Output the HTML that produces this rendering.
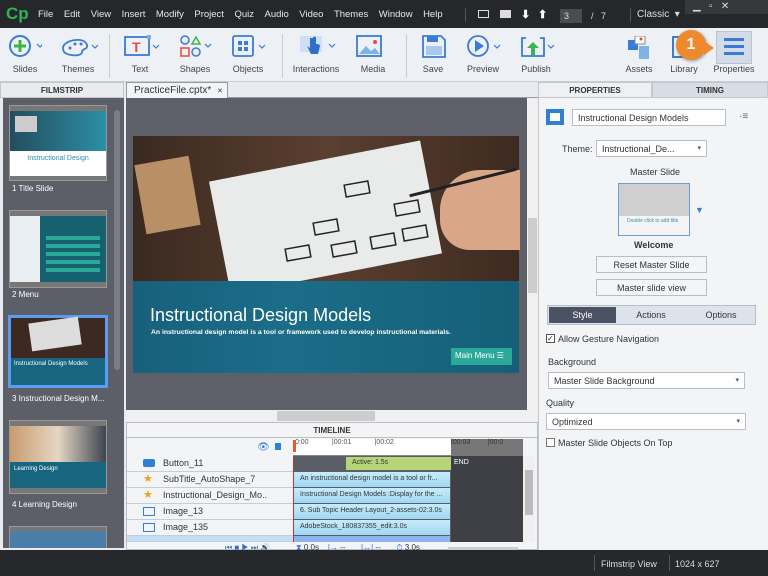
<!DOCTYPE html>
<html><head><meta charset="utf-8"><style>
*{margin:0;padding:0;box-sizing:border-box}
body{width:768px;height:576px;overflow:hidden;background:#e8ebf0;font-family:"Liberation Sans",sans-serif;font-size:9px;color:#333;position:relative}
.a{position:absolute}
.menu span{margin-right:10.5px;color:#e8e8e8;font-size:9.5px}
.tb{position:absolute;top:64px;font-size:9px;color:#444;text-align:center;width:60px}
.ic{position:absolute}
.ph{font-weight:bold;font-size:8px;text-align:center;color:#333}
.row{height:16px;border-bottom:1px solid #c8ccd4;position:absolute;left:0;width:166px;font-size:9px;color:#333}
.bar{position:absolute;left:0;height:15px;background:linear-gradient(#c8ecfb,#9ed8f2);font-size:7px;padding:3px 0 0 6px;color:#333;width:156px}
.btn{position:absolute;background:#f4f5f7;border:1px solid #b9bdc5;text-align:center;font-size:9px;padding-top:3px}
.dd{position:absolute;background:#fff;border:1px solid #b9bdc5;font-size:9px;padding:3px 5px}
</style></head><body>
<div class="a" style="left:0;top:0;width:768px;height:28px;background:#25272b"></div>
<div class="a" style="left:6px;top:4px;color:#2fb457;font-weight:bold;font-size:17px">Cp</div>
<div class="a menu" style="left:38px;top:9px;white-space:nowrap"><span>File</span><span>Edit</span><span>View</span><span>Insert</span><span>Modify</span><span>Project</span><span>Quiz</span><span>Audio</span><span>Video</span><span>Themes</span><span>Window</span><span>Help</span></div>
<div class="a" style="left:465px;top:8px;width:1px;height:14px;background:#555"></div>
<div class="a" style="left:478px;top:10px;width:11px;height:8px;border:1px solid #ddd"></div>
<div class="a" style="left:500px;top:10px;width:11px;height:8px;background:#ddd"></div>
<div class="a" style="left:521px;top:8px;color:#fff;font-size:11px;font-weight:bold">⬇</div>
<div class="a" style="left:538px;top:8px;color:#fff;font-size:11px;font-weight:bold">⬆</div>
<div class="a" style="left:560px;top:9px;width:22px;height:14px;background:#4a4c50;color:#ddd;font-size:9px;padding:2px 4px">3</div>
<div class="a" style="left:591px;top:11px;color:#ddd;font-size:9px">/ &nbsp; 7</div>
<div class="a" style="left:630px;top:8px;width:1px;height:14px;background:#555"></div>
<div class="a" style="left:637px;top:9px;color:#ddd;font-size:10px">Classic &nbsp;▾</div>
<div class="a" style="left:685px;top:0;width:83px;height:14px;background:#36383c"></div>
<div class="a" style="left:693px;top:1px;color:#ddd;font-size:10px;white-space:nowrap">▁ &nbsp; ▫ &nbsp;  ✕</div>
<div class="a" style="left:0;top:28px;width:768px;height:54px;background:#edf0f5;border-bottom:1px solid #c9ccd3"></div>
<svg class="ic" style="left:8px;top:34px" width="34" height="24"><circle cx="12" cy="12" r="10" fill="none" stroke="#3a7bd5" stroke-width="2"/><path d="M12 6v12M6 12h12" stroke="#3bb54a" stroke-width="3"/><path d="M29 10l3 3 3-3" fill="none" stroke="#3a7bd5" stroke-width="1.2"/></svg>
<svg class="ic" style="left:60px;top:36px" width="38" height="22"><path d="M3 12c0-8 22-12 24-3 1 5-5 3-5 7 0 3-6 4-11 3C5 18 3 16 3 12z" fill="none" stroke="#3a7bd5" stroke-width="1.8"/><circle cx="10" cy="12" r="1.5" fill="#3a7bd5"/><circle cx="15" cy="8" r="1.5" fill="#3a7bd5"/><circle cx="21" cy="8" r="1.5" fill="#3a7bd5"/><path d="M32 9l3 3 3-3" fill="none" stroke="#3a7bd5" stroke-width="1.2"/></svg>
<div class="a" style="left:109px;top:34px;width:1px;height:44px;background:#c9ccd3"></div>
<svg class="ic" style="left:124px;top:35px" width="36" height="24"><rect x="1" y="2" width="24" height="18" fill="none" stroke="#3a7bd5" stroke-width="1.8"/><text x="8" y="17" fill="#e84b3c" font-size="14" font-family="Liberation Sans" font-weight="bold">T</text><rect x="23" y="0" width="4" height="4" fill="#8ad" /><path d="M29 10l3 3 3-3" fill="none" stroke="#3a7bd5" stroke-width="1.2"/></svg>
<svg class="ic" style="left:179px;top:35px" width="36" height="24"><circle cx="6" cy="5" r="4" fill="none" stroke="#3a7bd5" stroke-width="1.5"/><path d="M13 9l4-7 4 7z" fill="none" stroke="#3bb54a" stroke-width="1.5"/><rect x="2" y="13" width="8" height="8" fill="none" stroke="#e84b3c" stroke-width="1.5"/><circle cx="17" cy="17" r="4" fill="none" stroke="#3a7bd5" stroke-width="1.5"/><path d="M26 9l3 3 3-3" fill="none" stroke="#3a7bd5" stroke-width="1.2"/></svg>
<svg class="ic" style="left:232px;top:35px" width="36" height="24"><rect x="1" y="1" width="20" height="20" rx="2" fill="none" stroke="#3a7bd5" stroke-width="1.8"/><rect x="6" y="6" width="4" height="4" fill="#3a7bd5"/><rect x="12" y="6" width="4" height="4" fill="#3a7bd5"/><rect x="6" y="12" width="4" height="4" fill="#3a7bd5"/><rect x="12" y="12" width="4" height="4" fill="#3a7bd5"/><path d="M27 10l3 3 3-3" fill="none" stroke="#3a7bd5" stroke-width="1.2"/></svg>
<div class="a" style="left:282px;top:34px;width:1px;height:44px;background:#c9ccd3"></div>
<svg class="ic" style="left:300px;top:34px" width="36" height="24"><rect x="0" y="2" width="22" height="16" fill="#cde0f5"/><path d="M10 4v10l-3-2 4 8h7l2-8c0-2-3-2-4-2V4c0-2-3-2-3 0z" fill="#2f6fc8"/><path d="M29 10l3 3 3-3" fill="none" stroke="#3a7bd5" stroke-width="1.2"/></svg>
<svg class="ic" style="left:356px;top:35px" width="34" height="24"><rect x="1" y="1" width="24" height="20" fill="none" stroke="#3a7bd5" stroke-width="1.8"/><path d="M3 19l7-8 5 5 4-3 5 6z" fill="#7fb3e8"/><circle cx="19" cy="7" r="2" fill="#e84b3c"/></svg>
<div class="a" style="left:406px;top:34px;width:1px;height:44px;background:#c9ccd3"></div>
<svg class="ic" style="left:422px;top:35px" width="24" height="24"><path d="M1 1h18l4 4v17H1z" fill="none" stroke="#3a7bd5" stroke-width="1.8"/><rect x="5" y="1" width="11" height="6" fill="#3a7bd5"/><rect x="4" y="11" width="16" height="9" fill="#a8c8ef"/></svg>
<svg class="ic" style="left:467px;top:35px" width="36" height="24"><circle cx="11" cy="11" r="10" fill="none" stroke="#3a7bd5" stroke-width="1.8"/><path d="M8 5v12l9-6z" fill="#3a7bd5"/><path d="M27 10l3 3 3-3" fill="none" stroke="#3a7bd5" stroke-width="1.2"/></svg>
<svg class="ic" style="left:520px;top:36px" width="36" height="24"><path d="M6 2H2v18h22V2h-4" fill="none" stroke="#3a7bd5" stroke-width="1.8"/><path d="M13 6l-6 6h4v7h4v-7h4z" fill="#3bb54a"/><path d="M28 9l3 3 3-3" fill="none" stroke="#3a7bd5" stroke-width="1.2"/></svg>
<svg class="ic" style="left:627px;top:36px" width="26" height="24"><rect x="1" y="4" width="10" height="10" fill="#3a7bd5"/><rect x="8" y="0" width="10" height="8" fill="#fff" stroke="#888"/><circle cx="14" cy="3" r="1.5" fill="#e84b3c"/><rect x="12" y="10" width="10" height="13" fill="#7fb3e8"/></svg>
<div class="a" style="left:672px;top:36px;width:20px;height:22px;border:2px solid #3a7bd5"></div>
<div class="a" style="left:676px;top:30px;width:30px;height:30px;border-radius:50%;background:#ee8a2d;color:#fff;font-weight:bold;font-size:16px;text-align:center;line-height:30px;box-shadow:1px 1px 3px rgba(0,0,0,.4)">1</div>
<div class="a" style="left:704px;top:41px;width:0;height:0;border-top:7px solid transparent;border-bottom:7px solid transparent;border-left:10px solid #ee8a2d"></div>
<div class="a" style="left:716px;top:31px;width:36px;height:33px;background:#d4dbe6;border:1px solid #b9c3d1"></div>
<div class="a" style="left:724px;top:38px;width:20px;height:3px;background:#3a7bd5;box-shadow:0 7px 0 #3a7bd5,0 14px 0 #3a7bd5"></div>
<div class="tb" style="left:-5px">Slides</div><div class="tb" style="left:48px">Themes</div><div class="tb" style="left:110px">Text</div><div class="tb" style="left:165px">Shapes</div><div class="tb" style="left:218px">Objects</div><div class="tb" style="left:286px">Interactions</div><div class="tb" style="left:343px">Media</div><div class="tb" style="left:403px">Save</div><div class="tb" style="left:453px">Preview</div><div class="tb" style="left:506px">Publish</div><div class="tb" style="left:609px">Assets</div><div class="tb" style="left:654px">Library</div><div class="tb" style="left:704px">Properties</div>
<div class="a ph" style="left:0;top:82px;width:124px;height:16px;background:#e9ebef;border:1px solid #c4c7cd;padding-top:3px">FILMSTRIP</div>
<div class="a" style="left:126px;top:82px;width:102px;height:16px;background:#f3f4f6;border:1px solid #999;border-bottom:none;font-size:10px;padding:2px 0 0 7px">PracticeFile.cptx* <span style="font-size:7px;margin-left:3px">✕</span></div>
<div class="a" style="left:228px;top:97px;width:310px;height:1px;background:#999"></div>
<div class="a ph" style="left:538px;top:82px;width:114px;height:16px;background:#eef0f3;border:1px solid #c4c7cd;padding-top:3px">PROPERTIES</div>
<div class="a ph" style="left:652px;top:82px;width:116px;height:16px;background:#d7dce5;border:1px solid #c4c7cd;padding-top:3px">TIMING</div>
<div class="a" style="left:3px;top:98px;width:121px;height:450px;background:#5c5f67"></div>
<div class="a" style="left:114px;top:110px;width:6px;height:260px;background:#7a7d85;border-radius:3px"></div>
<div class="a" style="left:9px;top:105px;width:98px;height:76px;background:#777;border:1px solid #999"></div>
<div class="a" style="left:10px;top:111px;width:96px;height:40px;background:linear-gradient(90deg,#244d5e,#2b8fa6)"></div>
<div class="a" style="left:15px;top:116px;width:22px;height:16px;background:#ccc"></div>
<div class="a" style="left:10px;top:151px;width:96px;height:25px;background:#fff;color:#2a8fb0;font-size:7px;text-align:center;padding-top:4px">Instructional Design</div>
<div class="a" style="left:12px;top:184px;color:#fff;font-size:8px">1 Title Slide</div>
<div class="a" style="left:9px;top:210px;width:98px;height:78px;background:#777;border:1px solid #999"></div>
<div class="a" style="left:10px;top:216px;width:30px;height:66px;background:#e9eef2"></div>
<div class="a" style="left:40px;top:216px;width:66px;height:66px;background:#17606f"></div>
<div class="a" style="left:46px;top:236px;width:54px;height:4px;background:#2aa89a;box-shadow:0 8px 0 #2aa89a,0 16px 0 #2aa89a,0 24px 0 #2aa89a,0 32px 0 #2aa89a"></div>
<div class="a" style="left:12px;top:290px;color:#fff;font-size:8px">2 Menu</div>
<div class="a" style="left:8px;top:315px;width:100px;height:73px;border:3px solid #5b9bf0;background:#3c2a22"></div>
<div class="a" style="left:30px;top:320px;width:50px;height:28px;background:#ddd;transform:rotate(-8deg)"></div>
<div class="a" style="left:11px;top:358px;width:94px;height:27px;background:#17657e;color:#fff;font-size:6px;padding:3px">Instructional Design Models</div>
<div class="a" style="left:12px;top:394px;color:#fff;font-size:8px">3 Instructional Design M...</div>
<div class="a" style="left:9px;top:420px;width:98px;height:74px;background:#777;border:1px solid #999"></div>
<div class="a" style="left:10px;top:426px;width:96px;height:36px;background:linear-gradient(90deg,#c99c6e,#e5d6c4,#3d4450)"></div>
<div class="a" style="left:10px;top:462px;width:96px;height:26px;background:#17657e;color:#fff;font-size:6px;padding:4px">Learning Design</div>
<div class="a" style="left:12px;top:500px;color:#fff;font-size:8px">4 Learning Design</div>
<div class="a" style="left:9px;top:526px;width:98px;height:22px;background:#777;border:1px solid #999"></div>
<div class="a" style="left:10px;top:531px;width:96px;height:17px;background:#4a7da8"></div>
<div class="a" style="left:126px;top:98px;width:401px;height:312px;background:#5d6068"></div>
<div class="a" style="left:527px;top:98px;width:11px;height:312px;background:#f0f0f0"></div>
<div class="a" style="left:528px;top:218px;width:9px;height:75px;background:#ccc"></div>
<div class="a" style="left:126px;top:410px;width:412px;height:12px;background:#f0f0f0"></div>
<div class="a" style="left:277px;top:411px;width:98px;height:10px;background:#ccc"></div>
<div class="a" style="left:133px;top:136px;width:386px;height:145px;background:linear-gradient(90deg,#3a2920,#5b3f30 50%,#3e2a20)"></div>
<div class="a" style="left:140px;top:160px;width:55px;height:70px;background:#b88f66;transform:rotate(-10deg)"></div>
<div class="a" style="left:218px;top:160px;width:215px;height:115px;background:#e9eaea;transform:rotate(-11deg)"></div>
<svg class="a" style="left:260px;top:175px" width="170" height="90"><g fill="none" stroke="#222" stroke-width="1.5"><rect x="85" y="8" width="24" height="12" transform="rotate(-10 97 14)"/><rect x="135" y="27" width="24" height="12" transform="rotate(-10 147 33)"/><rect x="54" y="46" width="24" height="12" transform="rotate(-10 66 52)"/><rect x="26" y="72" width="24" height="12" transform="rotate(-10 38 78)"/><rect x="72" y="68" width="24" height="12" transform="rotate(-10 84 74)"/><rect x="111" y="60" width="24" height="12" transform="rotate(-10 123 66)"/><rect x="143" y="52" width="24" height="12" transform="rotate(-10 155 58)"/></g></svg>
<div class="a" style="left:440px;top:170px;width:80px;height:80px;background:#d9a688;border-radius:40px 0 0 30px"></div>
<div class="a" style="left:408px;top:181px;width:110px;height:3px;background:#222;transform:rotate(-14deg)"></div>
<div class="a" style="left:133px;top:281px;width:386px;height:92px;background:linear-gradient(90deg,#17607c,#1b6d88 40%,#155f78)"></div>
<div class="a" style="left:150px;top:305px;color:#fff;font-size:18px">Instructional Design Models</div>
<div class="a" style="left:151px;top:329px;color:#fff;font-size:6.8px;font-weight:bold;white-space:nowrap">An instructional design model is a tool or framework used to develop instructional materials.</div>
<div class="a" style="left:451px;top:348px;width:61px;height:17px;background:#2aa89a;color:#fff;font-size:8px;padding:3px 4px">Main Menu ☰</div>
<div class="a" style="left:126px;top:422px;width:412px;height:128px;background:#f3f4f6;border:1px solid #b9bdc5"></div>
<div class="a ph" style="left:126px;top:424px;width:412px;height:14px;padding-top:2px;border-bottom:1px solid #b9bdc5">TIMELINE</div>
<div class="a" style="left:257px;top:442px;color:#2f7fd6;font-size:10px">👁</div>
<div class="a" style="left:275px;top:443px;width:6px;height:7px;background:#2f7fd6"></div>
<div class="a" style="left:293px;top:439px;width:158px;height:17px;background:#fff;border-bottom:1px solid #888;font-size:7px;color:#555;white-space:nowrap">&nbsp;0:00 &nbsp; &nbsp; &nbsp; &nbsp; &nbsp; &nbsp;|00:01 &nbsp; &nbsp; &nbsp; &nbsp; &nbsp; &nbsp;|00:02</div>
<div class="a" style="left:451px;top:439px;width:72px;height:17px;background:#777;font-size:7px;color:#333">|00:03 &nbsp; &nbsp; &nbsp; &nbsp; |00:0</div>
<div class="a" style="left:293px;top:440px;width:3px;height:12px;background:#e53"></div>
<div class="a" style="left:293px;top:456px;width:230px;height:86px;background:#5b5e66"></div>
<div class="a" style="left:451px;top:456px;width:72px;height:86px;background:#3e4046;color:#fff;font-size:7px;padding:3px 3px">END</div>
<div class="a" style="left:293px;top:456px;width:1px;height:86px;background:#c33"></div>
<div class="a" style="left:346px;top:457px;width:105px;height:13px;background:#b5d577;font-size:7px;padding:2px 6px">Active: 1.5s</div>
<div class="a" style="left:523px;top:456px;width:12px;height:86px;background:#f0f0f0"></div>
<div class="a" style="left:525px;top:470px;width:8px;height:45px;background:#bbb"></div>
<div class="a" style="left:127px;top:456px">
 <div class="row" style="top:0"><span class="a" style="left:16px;top:3px;width:12px;height:8px;background:#2f7fd6;border-radius:2px"></span><span class="a" style="left:36px;top:2px">Button_11</span></div>
 <div class="row" style="top:16px"><span class="a" style="left:16px;top:0;color:#e9a21a;font-size:11px">★</span><span class="a" style="left:36px;top:2px">SubTitle_AutoShape_7</span></div>
 <div class="row" style="top:32px"><span class="a" style="left:16px;top:0;color:#e9a21a;font-size:11px">★</span><span class="a" style="left:36px;top:2px">Instructional_Design_Mo..</span></div>
 <div class="row" style="top:48px"><span class="a" style="left:16px;top:3px;width:12px;height:9px;border:1px solid #2f7fd6"></span><span class="a" style="left:36px;top:2px">Image_13</span></div>
 <div class="row" style="top:64px"><span class="a" style="left:16px;top:3px;width:12px;height:9px;border:1px solid #2f7fd6"></span><span class="a" style="left:36px;top:2px">Image_135</span></div>
 <div class="row" style="top:80px;height:6px;background:#bfe0f7;overflow:hidden"></div>
</div>
<div class="a" style="left:294px;top:472px"><div class="bar" style="top:0">An instructional design model is a tool or fr...</div><div class="bar" style="top:16px">Instructional Design Models :Display for the ...</div><div class="bar" style="top:32px">6. Sub Topic Header Layout_2-assets-02:3.0s</div><div class="bar" style="top:48px">AdobeStock_180837355_edit:3.0s</div><div class="bar" style="top:64px;height:6px;background:#8fb3ef"></div></div>
<div class="a" style="left:225px;top:543px;font-size:8px;color:#3a6fc0;white-space:nowrap">⏮ ■ ▶ ⏭ 🔊</div>
<div class="a" style="left:296px;top:543px;font-size:8px;color:#333;white-space:nowrap"><span style="color:#2f6fc8">⧗</span> 0.0s &nbsp; &nbsp;<span style="color:#2f6fc8">|→</span> -- &nbsp; &nbsp; &nbsp; <span style="color:#2f6fc8">|↔|</span> -- &nbsp; &nbsp; &nbsp; <span style="color:#2f6fc8">⏱</span> 3.0s</div>
<div class="a" style="left:448px;top:547px;width:70px;height:3px;background:#ccc"></div>
<div class="a" style="left:538px;top:98px;width:230px;height:452px;background:#f3f4f6;border-left:1px solid #c4c7cd"></div>
<div class="a" style="left:546px;top:109px;width:18px;height:16px;background:#2f7fd6"></div>
<div class="a" style="left:550px;top:113px;width:10px;height:8px;background:#fff"></div>
<div class="dd" style="left:572px;top:109px;width:154px;height:17px">Instructional Design Models</div>
<div class="a" style="left:739px;top:111px;color:#666;font-size:10px">·≡</div>
<div class="a" style="left:562px;top:144px">Theme:</div>
<div class="dd" style="left:596px;top:140px;width:111px;height:17px">Instructional_De... <span style="float:right;font-size:7px;color:#555">▾</span></div>
<div class="a" style="left:630px;top:167px;font-size:9px">Master Slide</div>
<div class="a" style="left:618px;top:183px;width:72px;height:53px;border:1px solid #6a9fd8;background:#f4f4f4"></div>
<div class="a" style="left:619px;top:184px;width:70px;height:32px;background:#cfcfcf"></div>
<div class="a" style="left:627px;top:218px;font-size:5px;color:#3a8ab0">Double click to add title</div>
<div class="a" style="left:695px;top:205px;color:#2f7fd6;font-size:9px">▼</div>
<div class="a" style="left:634px;top:240px;font-weight:bold;font-size:9px">Welcome</div>
<div class="btn" style="left:596px;top:256px;width:111px;height:17px">Reset Master Slide</div>
<div class="btn" style="left:596px;top:279px;width:111px;height:17px">Master slide view</div>
<div class="a" style="left:547px;top:305px;width:209px;height:20px;background:#dde3ec;border:1px solid #b9bdc5"></div>
<div class="a" style="left:549px;top:307px;width:67px;height:16px;background:#4a5263;color:#fff;text-align:center;padding-top:3px">Style</div>
<div class="a" style="left:617px;top:310px;width:68px;text-align:center">Actions</div>
<div class="a" style="left:686px;top:310px;width:70px;text-align:center">Options</div>
<div class="a" style="left:546px;top:334px;width:9px;height:9px;border:1px solid #555;background:#fff;font-size:8px;line-height:7px">✓</div>
<div class="a" style="left:558px;top:334px">Allow Gesture Navigation</div>
<div class="a" style="left:548px;top:357px">Background</div>
<div class="dd" style="left:548px;top:372px;width:197px;height:17px">Master Slide Background<span style="float:right;font-size:7px;color:#555">▾</span></div>
<div class="a" style="left:546px;top:398px">Quality</div>
<div class="dd" style="left:546px;top:413px;width:200px;height:17px">Optimized<span style="float:right;font-size:7px;color:#555">▾</span></div>
<div class="a" style="left:546px;top:438px;width:9px;height:9px;border:1px solid #777;background:#fff"></div>
<div class="a" style="left:558px;top:438px">Master Slide Objects On Top</div>
<div class="a" style="left:0;top:550px;width:768px;height:26px;background:#26282c"></div>
<div class="a" style="left:594px;top:555px;width:1px;height:16px;background:#555"></div>
<div class="a" style="left:601px;top:559px;color:#ddd;font-size:9px">Filmstrip View</div>
<div class="a" style="left:669px;top:555px;width:1px;height:16px;background:#555"></div>
<div class="a" style="left:675px;top:559px;color:#ddd;font-size:9px">1024 x 627</div>
</body></html>
